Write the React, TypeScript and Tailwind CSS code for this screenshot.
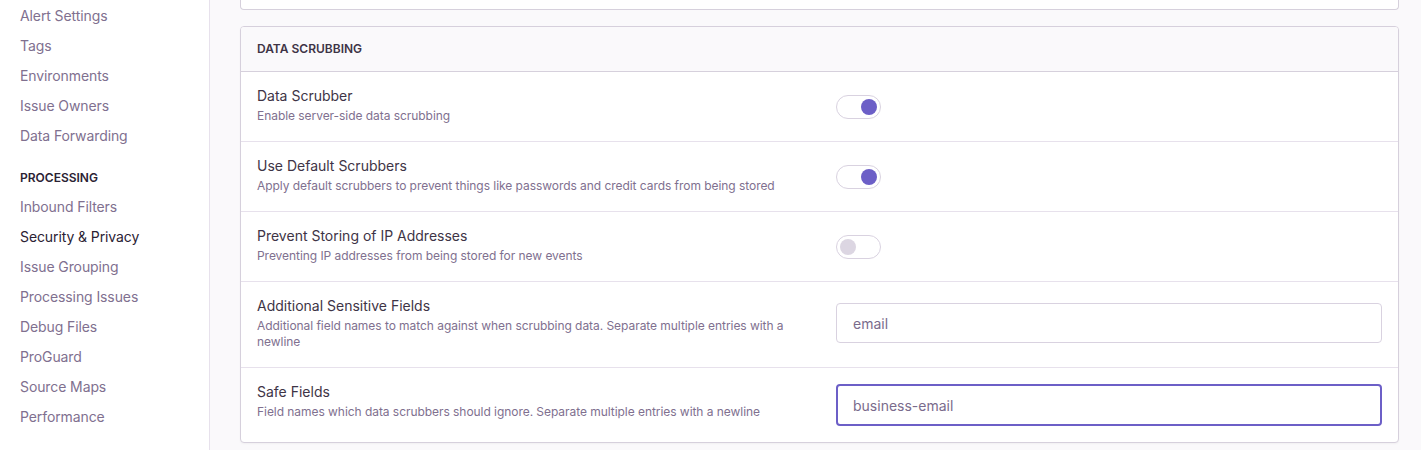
import { useState } from "react";

const font = { fontFamily: "Inter, Roboto, 'Liberation Sans', sans-serif" };

const groups = [
  {
    title: null as string | null,
    items: ["Alert Settings", "Tags", "Environments", "Issue Owners", "Data Forwarding"],
  },
  {
    title: "Processing",
    items: [
      "Inbound Filters",
      "Security & Privacy",
      "Issue Grouping",
      "Processing Issues",
      "Debug Files",
      "ProGuard",
      "Source Maps",
      "Performance",
    ],
  },
];

const Toggle = ({ on, onChange }: { on: boolean; onChange: () => void }) => (
  <button
    type="button"
    onClick={onChange}
    className={`flex h-[24px] w-[45px] items-center rounded-full border border-[#d9d2e0] bg-white px-[3px] ${
      on ? "justify-end" : "justify-start"
    }`}
  >
    <span
      className={`h-[16px] w-[16px] rounded-full ${on ? "bg-[#6c5fc7]" : "bg-[#dcd6e2]"}`}
    />
  </button>
);

const Row = ({
  title,
  help,
  children,
  last,
}: {
  title: string;
  help: string;
  children: React.ReactNode;
  last?: boolean;
}) => (
  <div className={`flex ${last ? "min-h-[74px]" : "border-b border-[#e7e1ec]"}`}>
    <div className="w-[595px] shrink-0 pl-4 pr-[28px] pt-[15px] pb-[17px]">
      <div className="text-[14px] leading-[18px] text-[#3e3446]">{title}</div>
      <div className="mt-[3px] text-[12px] leading-[16px] tracking-[-0.05px] text-[#80708f]">
        {help}
      </div>
    </div>
    <div className="flex flex-1 items-center pr-4">{children}</div>
  </div>
);

export default function App() {
  const [scrubber, setScrubber] = useState(true);
  const [defaults, setDefaults] = useState(true);
  const [ip, setIp] = useState(false);

  return (
    <div className="flex h-[450px] overflow-hidden bg-[#faf9fb]" style={font}>
      {/* Sidebar */}
      <aside className="w-[210px] shrink-0 border-r border-[#e7e1ec] bg-white px-5">
        {groups.map((g, gi) => (
          <div key={gi} className={gi > 0 ? "mt-[18px]" : ""}>
            {g.title && (
              <div className="mb-[3px] flex h-[20px] items-center text-[12px] font-semibold uppercase text-[#2b2233]">
                {g.title}
              </div>
            )}
            {g.items.map((item) => (
              <div
                key={item}
                className={`flex h-[30px] items-center text-[14px] tracking-[-0.1px] ${
                  item === "Security & Privacy" ? "text-[#2b2233]" : "text-[#80708f]"
                }`}
              >
                {item}
              </div>
            ))}
          </div>
        ))}
      </aside>

      {/* Main */}
      <main className="flex-1 pl-[30px] pr-[22px]">
        <div className="h-[10px] rounded-b-[4px] border-x border-b border-[#d6d0dc] bg-white" />

        <section className="mt-[16px] overflow-hidden rounded-[4px] border border-[#d6d0dc] bg-white shadow-[0_1px_2px_rgba(0,0,0,0.04)]">
          <div className="flex h-[45px] items-center border-b border-[#d6d0dc] bg-[#faf9fb] px-4 text-[12px] font-semibold uppercase text-[#3e3446]">
            Data Scrubbing
          </div>

          <Row title="Data Scrubber" help="Enable server-side data scrubbing">
            <Toggle on={scrubber} onChange={() => setScrubber(!scrubber)} />
          </Row>
          <Row
            title="Use Default Scrubbers"
            help="Apply default scrubbers to prevent things like passwords and credit cards from being stored"
          >
            <Toggle on={defaults} onChange={() => setDefaults(!defaults)} />
          </Row>
          <Row
            title="Prevent Storing of IP Addresses"
            help="Preventing IP addresses from being stored for new events"
          >
            <Toggle on={ip} onChange={() => setIp(!ip)} />
          </Row>
          <Row
            title="Additional Sensitive Fields"
            help="Additional field names to match against when scrubbing data. Separate multiple entries with a newline"
          >
            <input
              defaultValue="email"
              className="-mt-[3px] h-[40px] w-full rounded-[4px] border border-[#d9d2e0] bg-white px-4 text-[14px] text-[#7a6b8c] outline-none"
            />
          </Row>
          <Row
            title="Safe Fields"
            help="Field names which data scrubbers should ignore. Separate multiple entries with a newline"
            last
          >
            <input
              defaultValue="business-email"
              className="h-[42px] w-full rounded-[4px] border-2 border-[#6c5fc7] bg-white px-[15px] text-[14px] text-[#7a6b8c] outline-none"
            />
          </Row>
        </section>
      </main>
    </div>
  );
}
